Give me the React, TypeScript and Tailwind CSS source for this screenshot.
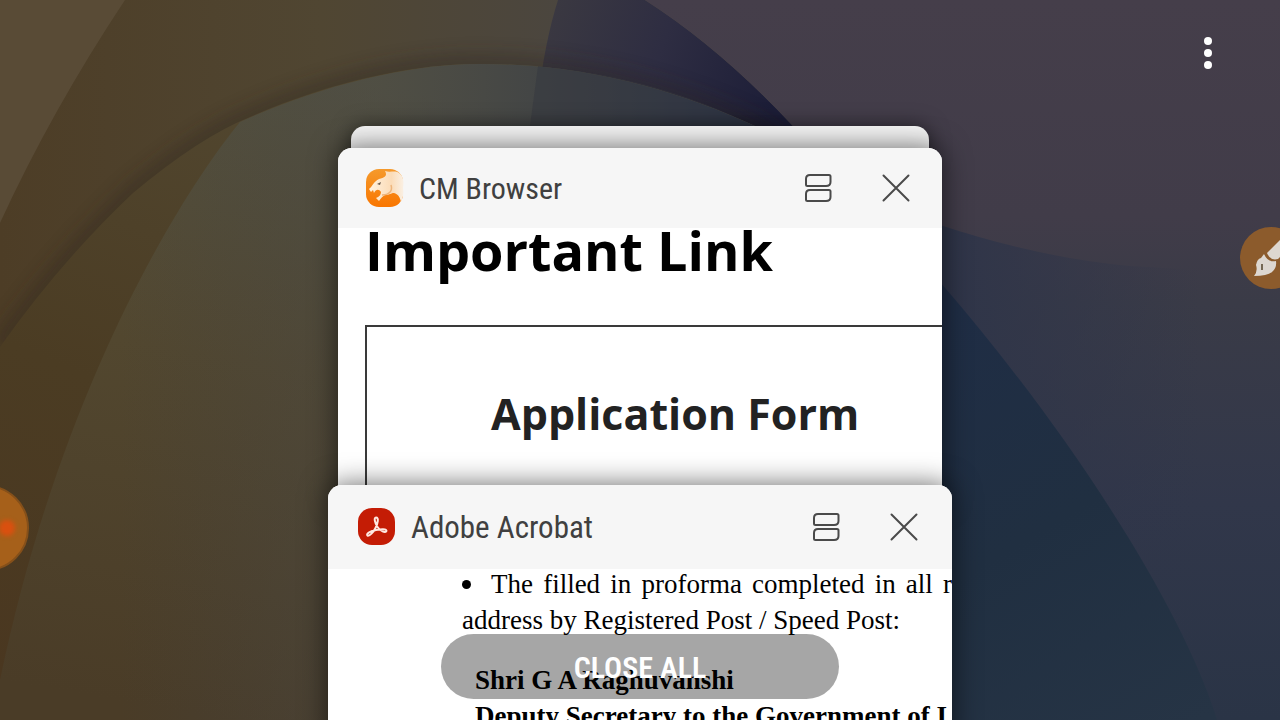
import type { ReactNode } from "react";

const condensed = "font-['Roboto_Condensed','Liberation_Sans_Narrow','Roboto',sans-serif]";

function Wallpaper() {
  return (
    <svg
      className="absolute inset-0 h-full w-full"
      viewBox="0 0 1280 720"
      preserveAspectRatio="xMidYMid slice"
      aria-hidden="true"
    >
      <defs>
        <linearGradient id="base" x1="0" y1="0" x2="1" y2="0">
          <stop offset="0" stopColor="#4d3d26" />
          <stop offset="0.25" stopColor="#504632" />
          <stop offset="0.44" stopColor="#4b463f" />
        </linearGradient>
        <linearGradient id="navy" gradientUnits="userSpaceOnUse" x1="540" y1="20" x2="770" y2="110">
          <stop offset="0" stopColor="#3b3941" />
          <stop offset="0.5" stopColor="#2e2d42" />
          <stop offset="1" stopColor="#1d1e38" />
        </linearGradient>
        <linearGradient id="mauve" x1="0" y1="0" x2="0" y2="1">
          <stop offset="0" stopColor="#453e4a" />
          <stop offset="0.3" stopColor="#413c49" />
          <stop offset="0.42" stopColor="#3a3b47" />
          <stop offset="0.7" stopColor="#31374a" />
          <stop offset="1" stopColor="#2a3446" />
        </linearGradient>
        <linearGradient id="slate" gradientUnits="userSpaceOnUse" x1="945" y1="0" x2="1200" y2="0">
          <stop offset="0" stopColor="#2f3549" />
          <stop offset="1" stopColor="#2f3549" stopOpacity="0" />
        </linearGradient>
        <linearGradient id="deep" gradientUnits="userSpaceOnUse" x1="950" y1="300" x2="1200" y2="720">
          <stop offset="0" stopColor="#1f2d45" />
          <stop offset="0.5" stopColor="#202f41" />
          <stop offset="1" stopColor="#263445" />
        </linearGradient>
        <linearGradient id="outer" gradientUnits="userSpaceOnUse" x1="240" y1="100" x2="0" y2="680">
          <stop offset="0" stopColor="#51462f" />
          <stop offset="0.5" stopColor="#4b3c23" />
          <stop offset="1" stopColor="#4a3720" />
        </linearGradient>
        <linearGradient id="inner" gradientUnits="userSpaceOnUse" x1="340" y1="80" x2="230" y2="720">
          <stop offset="0" stopColor="#54513f" />
          <stop offset="0.45" stopColor="#52472f" />
          <stop offset="1" stopColor="#4a3c27" />
        </linearGradient>
        <linearGradient id="cool" gradientUnits="userSpaceOnUse" x1="120" y1="0" x2="760" y2="0">
          <stop offset="0" stopColor="#3f4145" stopOpacity="0" />
          <stop offset="0.4" stopColor="#4a4b49" stopOpacity="0.45" />
          <stop offset="1" stopColor="#273148" />
        </linearGradient>
        <filter id="soft" x="-20%" y="-20%" width="140%" height="140%">
          <feGaussianBlur stdDeviation="9" />
        </filter>
      </defs>
      <rect width="1280" height="720" fill="url(#base)" />
      <path d="M0 0H125Q52 110 0 223Z" fill="#594b36" />
      <path d="M558 0H645Q720 48 792 125L960 300H525Q529 90 558 0Z" fill="url(#navy)" />
      <path
        d="M0 347Q60 262 133 193Q200 137 250 117C330 82 410 64 480 64C590 64 680 92 757 127L950 290"
        fill="none"
        stroke="#2c211c"
        strokeWidth="18"
        opacity="0.4"
        filter="url(#soft)"
      />
      <path
        d="M0 347Q60 262 133 193Q200 137 250 117C330 82 410 64 480 64C590 64 680 92 757 127L950 290V720H0Z"
        fill="url(#outer)"
      />
      <path
        d="M240 122C180 195 60 390 0 680V720H950V290L757 127C680 92 590 64 480 64C400 64 310 90 240 122Z"
        fill="url(#inner)"
      />
      <path
        d="M240 122C180 195 60 390 0 680V720H950V290L757 127C680 92 590 64 480 64C400 64 310 90 240 122Z"
        fill="url(#cool)"
      />
      <path d="M538 66C620 73 690 94 757 127L800 200H520Z" fill="#34353f" opacity="0.45" />
      <path d="M645 0H1280V720H940V290L792 125Q720 48 645 0Z" fill="url(#mauve)" />
      <path d="M940 225Q1040 258 1130 266L1280 275V720H940Z" fill="url(#slate)" />
      <path d="M940 282C1060 420 1180 600 1217 720H940Z" fill="url(#deep)" />
    </svg>
  );
}

function SplitIcon() {
  return (
    <svg width="28" height="30" viewBox="0 0 28 30" fill="none" stroke="#4a4a4a" strokeWidth="2" strokeLinejoin="round">
      <path d="M6 2H25Q26.500 2 26.500 3.500V9Q26.500 13 22 13H3.500Q2 13 2 11.500V6Q2 2 6 2Z" />
      <path d="M6 17H25Q26.500 17 26.500 18.500V24Q26.500 28 22 28H3.500Q2 28 2 26.500V21Q2 17 6 17Z" />
    </svg>
  );
}

function CloseIcon() {
  return (
    <svg width="28" height="28" viewBox="0 0 28 28" fill="none" stroke="#4a4a4a" strokeWidth="2" strokeLinecap="round">
      <path d="M1.500 1.500L26.500 26.500M26.500 1.500L1.500 26.500" />
    </svg>
  );
}

function CmIcon() {
  return (
    <svg width="38" height="38" viewBox="0 0 38 38" aria-hidden="true">
      <defs>
        <linearGradient id="cm-bg" x1="0" y1="0" x2="0" y2="1">
          <stop offset="0" stopColor="#f59a2c" />
          <stop offset="1" stopColor="#f97600" />
        </linearGradient>
        <linearGradient id="cm-head" x1="0" y1="0" x2="1" y2="0">
          <stop offset="0" stopColor="#fff2df" />
          <stop offset="0.65" stopColor="#fbdcb8" />
          <stop offset="1" stopColor="#faf0e4" />
        </linearGradient>
      </defs>
      <rect width="37" height="38" rx="13" fill="url(#cm-bg)" />
      <path
        d="M3 20C6 18 8 12 13 10C18 9 22 7 19 2C24 4 29 1 33 4C38 8 38 14 37 19C38 24 37 29 35 33C34 28 32 25 28 24C25 24 24 26 19 26C17 27 15 29 13 32L10 29C13 28 15 26 15 23C13 20 10 20 8 24L7 21L5 23Z"
        fill="url(#cm-head)"
      />
      <path d="M16 26C23 26 27 22 25 16" stroke="#eeb57b" strokeWidth="1.500" fill="none" />
      <path d="M11 15L15 13L14 16Z" fill="#6b594b" />
    </svg>
  );
}

function AcrobatIcon() {
  return (
    <svg width="38" height="38" viewBox="0 0 38 38" aria-hidden="true">
      <rect width="37" height="37" rx="14" fill="#c41c05" />
      <path
        d="M18 9.500C21 9.500 20 15 17.500 20C15.500 24 11.500 28.500 9.500 27.500C7.500 25.500 13 23 18 22C23 21 28.500 20.500 28.500 23C27.500 25.500 22 23 19.500 19C17 15 15.500 9.500 18 9.500Z"
        fill="none"
        stroke="#ffe9e2"
        strokeWidth="2"
        strokeLinejoin="round"
      />
    </svg>
  );
}

function CardHeader({ icon, title, className }: { icon: ReactNode; title: string; className: string }) {
  return (
    <header className={`flex items-center bg-[#f6f6f6] ${condensed} ${className}`}>
      {icon}
      <h2 className="mt-[2px] ml-[15px] flex-1 leading-9 text-[#404040]">{title}</h2>
      <div className="flex items-center gap-[50px]">
        <button type="button" aria-label={`Open ${title} in split screen`}>
          <SplitIcon />
        </button>
        <button type="button" aria-label={`Close ${title}`}>
          <CloseIcon />
        </button>
      </div>
    </header>
  );
}

export default function App() {
  return (
    <div className="relative h-screen overflow-hidden bg-[#3c3a3c]">
      <Wallpaper />

      {/* Recent apps stack */}
      <main className="relative flex flex-col items-center pt-[126px]">
        <div className="h-9 w-full max-w-[578px] rounded-t-[14px] bg-[#f4f4f4] shadow-[0_0_20px_rgba(0,0,0,0.5)]" />

        <article className="-mt-[14px] h-[353px] w-full max-w-[604px] overflow-hidden rounded-t-[14px] bg-white shadow-[0_0_28px_rgba(0,0,0,0.6)]">
          <CardHeader icon={<CmIcon />} title="CM Browser" className="h-20 pr-8 pl-7 text-[30px]" />
          <div className="pl-[27px] font-['Open_Sans','Noto_Sans',sans-serif] font-bold">
            <h1 className="text-[54px] leading-[44px] text-black">Important Link</h1>
            <div className="mt-[53px] h-[180px] border-t-2 border-l-2 border-[#3a3a3a] pt-[63px] pl-[124px]">
              <p className="text-[43px] leading-[48px] text-[#222]">Application Form</p>
            </div>
          </div>
        </article>

        <article className="-mt-4 h-[260px] w-full max-w-[624px] overflow-hidden rounded-t-[14px] bg-white shadow-[0_0_28px_rgba(0,0,0,0.6)]">
          <CardHeader icon={<AcrobatIcon />} title="Adobe Acrobat" className="h-[84px] pr-[34px] pl-[30px] text-[31px]" />
          <div className="-mt-[3px] pl-[134px] font-['Liberation_Serif',serif] text-[27px] leading-9 whitespace-nowrap text-black">
            <div className="flex items-center">
              <span className="mr-5 h-[9px] w-[9px] rounded-full bg-black" />
              <p className="flex-1 [text-align-last:justify]">The filled in proforma completed in all r</p>
            </div>
            <p>address by Registered Post / Speed Post:</p>
            <div className="mt-6 pl-[13px] font-bold">
              <p>Shri G A Raghuvanshi</p>
              <p>Deputy Secretary to the Government of I</p>
            </div>
          </div>
        </article>
      </main>

      <button
        type="button"
        className={`absolute bottom-[21px] left-1/2 h-[65px] w-[398px] -translate-x-1/2 rounded-full bg-black/35 pt-[2px] text-[30px] font-semibold text-white ${condensed}`}
      >
        CLOSE ALL
      </button>

      <button
        type="button"
        aria-label="More options"
        className="absolute top-[37px] right-[68px] flex flex-col gap-1 text-white"
      >
        <span className="h-2 w-2 rounded-full bg-white" />
        <span className="h-2 w-2 rounded-full bg-white" />
        <span className="h-2 w-2 rounded-full bg-white" />
      </button>

      {/* Floating recorder bubbles */}
      <button
        type="button"
        aria-label="Brush"
        className="absolute top-[227px] -right-[22px] h-[62px] w-[62px] overflow-hidden rounded-full bg-[#8c5b2c]"
      >
        <svg width="62" height="62" viewBox="0 0 62 62" aria-hidden="true">
          <path d="M27 26L42 11L54 16L38 32Q30 34 27 26Z" fill="#ddd7d0" />
          <path d="M24 27Q28 36 36 34Q37 41 32 45Q27 49 14 49Q18 44 16 38Q17 32 21 31Z" fill="#ddd7d0" />
          <path d="M22 37V43" stroke="#756854" strokeWidth="2" />
        </svg>
      </button>
      <button
        type="button"
        aria-label="Record"
        className="absolute top-[485px] -left-[57px] flex h-[86px] w-[86px] items-center justify-end rounded-full border-2 border-[#85501a] bg-[#a6601a] pr-3"
      >
        <span className="h-4 w-4 rounded-full bg-[#d9500f] blur-[2px]" />
      </button>
    </div>
  );
}
